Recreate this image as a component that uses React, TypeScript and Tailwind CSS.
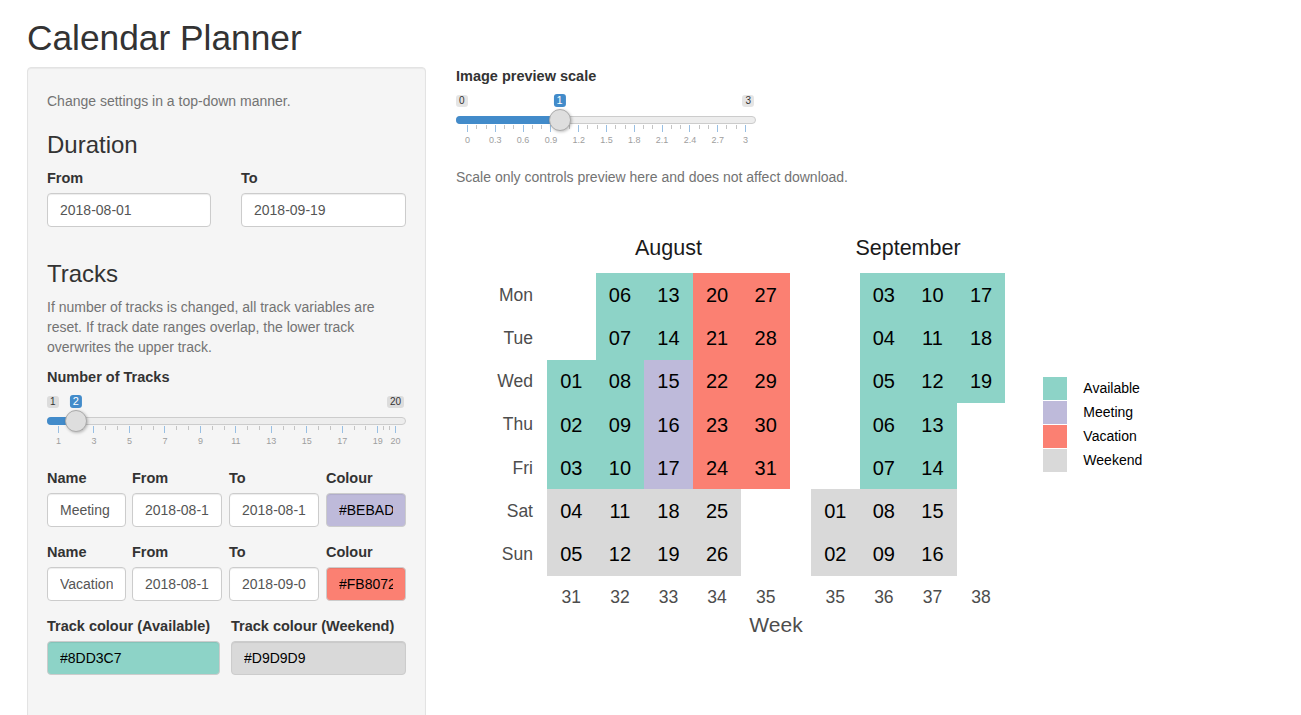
import React from "react";

const A = "bg-[#8DD3C7]";
const M = "bg-[#BEBADA]";
const V = "bg-[#FB8072]";
const W = "bg-[#D9D9D9]";

type Cell = [string, string] | null;

const august: Cell[][] = [
  [null, null, ["01", A], ["02", A], ["03", A], ["04", W], ["05", W]],
  [["06", A], ["07", A], ["08", A], ["09", A], ["10", A], ["11", W], ["12", W]],
  [["13", A], ["14", A], ["15", M], ["16", M], ["17", M], ["18", W], ["19", W]],
  [["20", V], ["21", V], ["22", V], ["23", V], ["24", V], ["25", W], ["26", W]],
  [["27", V], ["28", V], ["29", V], ["30", V], ["31", V], null, null],
];

const september: Cell[][] = [
  [null, null, null, null, null, ["01", W], ["02", W]],
  [["03", A], ["04", A], ["05", A], ["06", A], ["07", A], ["08", W], ["09", W]],
  [["10", A], ["11", A], ["12", A], ["13", A], ["14", A], ["15", W], ["16", W]],
  [["17", A], ["18", A], ["19", A], null, null, null, null],
];

const days = ["Mon", "Tue", "Wed", "Thu", "Fri", "Sat", "Sun"];

function Slider({
  width,
  min,
  max,
  value,
  majors,
  labels,
}: {
  width: number;
  min: number;
  max: number;
  value: number;
  majors: number[];
  labels: string[];
}) {
  const pad = 11;
  const x = (v: number) => pad + ((v - min) / (max - min)) * (width - 2 * pad);
  const minors: number[] = [];
  for (let i = 0; i < majors.length - 1; i++) {
    const a = majors[i];
    const b = majors[i + 1];
    minors.push(a + (b - a) / 3, a + (2 * (b - a)) / 3);
  }
  return (
    <div className="relative h-[61px]" style={{ width }}>
      <span className="absolute left-0 top-[4px] rounded-[3px] bg-black/10 px-[3px] text-[10px] leading-[12px] text-[#333]">
        {min}
      </span>
      <span className="absolute right-[2px] top-[4px] rounded-[3px] bg-black/10 px-[3px] text-[10px] leading-[12px] text-[#333]">
        {max}
      </span>
      <div className="absolute left-0 right-0 top-[25px] h-[8px] rounded-full border border-[#cccccc] bg-[#ededed]" />
      <div
        className="absolute left-0 top-[25px] h-[8px] rounded-l-full bg-[#428bca]"
        style={{ width: x(value) }}
      />
      {minors.map((m, i) => (
        <div
          key={"m" + i}
          className="absolute top-[34px] h-[4px] w-px bg-[#c4c4c4]"
          style={{ left: x(m) }}
        />
      ))}
      {majors.map((m, i) => (
        <div
          key={"M" + i}
          className="absolute top-[34px] h-[7px] w-px bg-[#98bfe3]"
          style={{ left: x(m) }}
        />
      ))}
      {majors.map((m, i) => (
        <span
          key={"L" + i}
          className="absolute top-[44px] -translate-x-1/2 text-[9px] leading-[11px] text-[#9e9e9e]"
          style={{ left: x(m) + 0.5 }}
        >
          {labels[i]}
        </span>
      ))}
      <div
        className="absolute top-[18px] h-[22px] w-[22px] -translate-x-1/2 rounded-full border border-[#ababab] bg-[#dedede] shadow-[1px_1px_3px_rgba(0,0,0,0.25)]"
        style={{ left: x(value) }}
      />
      <span
        className="absolute top-[3px] -translate-x-1/2 rounded-[3px] bg-[#428bca] px-[3px] text-[11px] leading-[13px] text-white"
        style={{ left: x(value) }}
      >
        {value}
      </span>
    </div>
  );
}

const inputBase =
  "block h-[34px] w-full rounded-[4px] border border-[#cccccc] px-[12px] text-[14px] outline-none shadow-[inset_0_1px_1px_rgba(0,0,0,0.075)]";

function Field({
  label,
  value,
  cls,
  w,
}: {
  label: string;
  value: string;
  cls: string;
  w: string;
}) {
  return (
    <div className={"flex flex-col " + w}>
      <div className="mb-[5px] h-[20px] whitespace-nowrap text-[14.5px] font-bold leading-[20px] text-[#333]">{label}</div>
      <input readOnly value={value} className={inputBase + " " + cls} />
    </div>
  );
}

function TrackRow({
  name,
  from,
  to,
  colour,
  colourCls,
}: {
  name: string;
  from: string;
  to: string;
  colour: string;
  colourCls: string;
}) {
  return (
    <div className="flex">
      <Field label="Name" value={name} cls="bg-white text-[#555]" w="w-[79px]" />
      <div className="w-[6px]" />
      <Field label="From" value={from} cls="bg-white text-[#555]" w="w-[90px]" />
      <div className="w-[7px]" />
      <Field label="To" value={to} cls="bg-white text-[#555]" w="w-[90px]" />
      <div className="w-[7px]" />
      <Field label="Colour" value={colour} cls={colourCls + " text-black"} w="w-[80px]" />
    </div>
  );
}

function MonthGrid({ cols }: { cols: Cell[][] }) {
  return (
    <div className="flex">
      {cols.map((col, ci) => (
        <div key={ci} className="flex flex-col">
          {col.map((c, ri) => (
            <div
              key={ri}
              className={
                "flex h-[43.3px] w-[48.6px] items-center justify-center text-[20px] text-black " +
                (c ? c[1] : "")
              }
            >
              {c ? c[0] : ""}
            </div>
          ))}
        </div>
      ))}
    </div>
  );
}

export default function App() {
  const scaleMajors = [0, 0.3, 0.6, 0.9, 1.2, 1.5, 1.8, 2.1, 2.4, 2.7, 3];
  const scaleLabels = ["0", "0.3", "0.6", "0.9", "1.2", "1.5", "1.8", "2.1", "2.4", "2.7", "3"];
  const trackMajors = [1, 3, 5, 7, 9, 11, 13, 15, 17, 19, 20];
  const trackLabels = trackMajors.map((v) => String(v));

  return (
    <div className="min-h-[715px] bg-white pl-[27px] text-[#333]" style={{ fontFamily: '"Liberation Sans", Arial, sans-serif' }}>
      <h1 className="pt-[18px] text-[35.3px] font-normal leading-[40px] text-[#333]">Calendar Planner</h1>
      <div className="mt-[9px] flex items-start gap-[30px]">
        {/* Sidebar */}
        <div className="w-[399px] rounded-[4px] border border-[#e3e3e3] bg-[#f5f5f5] px-[19px] pb-[60px] pt-[19px] shadow-[inset_0_1px_1px_rgba(0,0,0,0.05)]">
          <div className="flex flex-col">
            <p className="mt-[4px] text-[14px] leading-[20px] text-[#737373]">Change settings in a top-down manner.</p>
            <h3 className="mt-[21px] h-[26px] text-[24px] font-normal leading-[26px] text-[#333]">Duration</h3>
            <div className="mt-[10px] flex gap-[30px]">
              <Field label="From" value="2018-08-01" cls="bg-white text-[#555]" w="w-[164px]" />
              <Field label="To" value="2018-09-19" cls="bg-white text-[#555]" w="w-[165px]" />
            </div>
            <h3 className="mt-[34px] h-[26px] text-[24px] font-normal leading-[26px] text-[#333]">Tracks</h3>
            <p className="mt-[10px] text-[14px] leading-[20px] text-[#737373]">
              If number of tracks is changed, all track variables are reset. If track date ranges overlap, the lower track overwrites the upper track.
            </p>
            <div className="mt-[10px] h-[20px] text-[14.5px] font-bold leading-[20px] text-[#333]">Number of Tracks</div>
            <div className="mt-[5px]">
              <Slider width={359} min={1} max={20} value={2} majors={trackMajors} labels={trackLabels} />
            </div>
            <div className="mt-[15px]">
              <TrackRow name="Meeting" from="2018-08-15" to="2018-08-17" colour="#BEBADA" colourCls="bg-[#BEBADA]" />
            </div>
            <div className="mt-[15px]">
              <TrackRow name="Vacation" from="2018-08-18" to="2018-09-02" colour="#FB8072" colourCls="bg-[#FB8072]" />
            </div>
            <div className="mt-[15px] flex gap-[11px]">
              <Field label="Track colour (Available)" value="#8DD3C7" cls="bg-[#8DD3C7] text-black" w="w-[173px]" />
              <Field label="Track colour (Weekend)" value="#D9D9D9" cls="bg-[#D9D9D9] text-black" w="w-[175px]" />
            </div>
          </div>
        </div>

        {/* Main */}
        <div className="flex flex-1 flex-col">
          <div className="-mt-[1px] h-[20px] text-[14.5px] font-bold leading-[20px] text-[#333]">Image preview scale</div>
          <div className="mt-[5px]">
            <Slider width={300} min={0} max={3} value={1} majors={scaleMajors} labels={scaleLabels} />
          </div>
          <p className="mt-[15px] text-[14px] leading-[20px] text-[#737373]">
            Scale only controls preview here and does not affect download.
          </p>

          {/* Plot */}
          <div className="mt-[49px] flex flex-col">
            <div className="flex h-[24px] text-[21.5px] leading-[24px] text-[#1a1a1a]">
              <div className="w-[91px]" />
              <div className="w-[243px] text-center">August</div>
              <div className="w-[21px]" />
              <div className="w-[194px] text-center">September</div>
            </div>
            <div className="mt-[13px] flex">
              <div className="mr-[14px] flex w-[77px] flex-col">
                {days.map((d) => (
                  <div key={d} className="flex h-[43.3px] items-center justify-end text-[17.5px] text-[#4d4d4d]">
                    {d}
                  </div>
                ))}
              </div>
              <MonthGrid cols={august} />
              <div className="w-[21px]" />
              <MonthGrid cols={september} />
              <div className="ml-[38px] flex flex-col self-center">
                {[
                  ["Available", A],
                  ["Meeting", M],
                  ["Vacation", V],
                  ["Weekend", W],
                ].map(([label, cls], i) => (
                  <div key={label} className={"flex items-center " + (i > 0 ? "mt-px" : "")}>
                    <div className={"h-[23px] w-[24px] " + cls} />
                    <span className="ml-[16px] text-[14px] text-black">{label}</span>
                  </div>
                ))}
              </div>
            </div>
            <div className="mt-[9px] flex h-[24px] text-[17.5px] leading-[24px] text-[#4d4d4d]">
              <div className="w-[91px]" />
              {["31", "32", "33", "34", "35"].map((w) => (
                <div key={"a" + w} className="w-[48.6px] text-center">
                  {w}
                </div>
              ))}
              <div className="w-[21px]" />
              {["35", "36", "37", "38"].map((w) => (
                <div key={"s" + w} className="w-[48.6px] text-center">
                  {w}
                </div>
              ))}
            </div>
            <div className="mt-[4px] flex h-[24px] text-[21px] leading-[24px] text-[#4d4d4d]">
              <div className="w-[91px]" />
              <div className="w-[458px] text-center">Week</div>
            </div>
          </div>
        </div>
      </div>
    </div>
  );
}
